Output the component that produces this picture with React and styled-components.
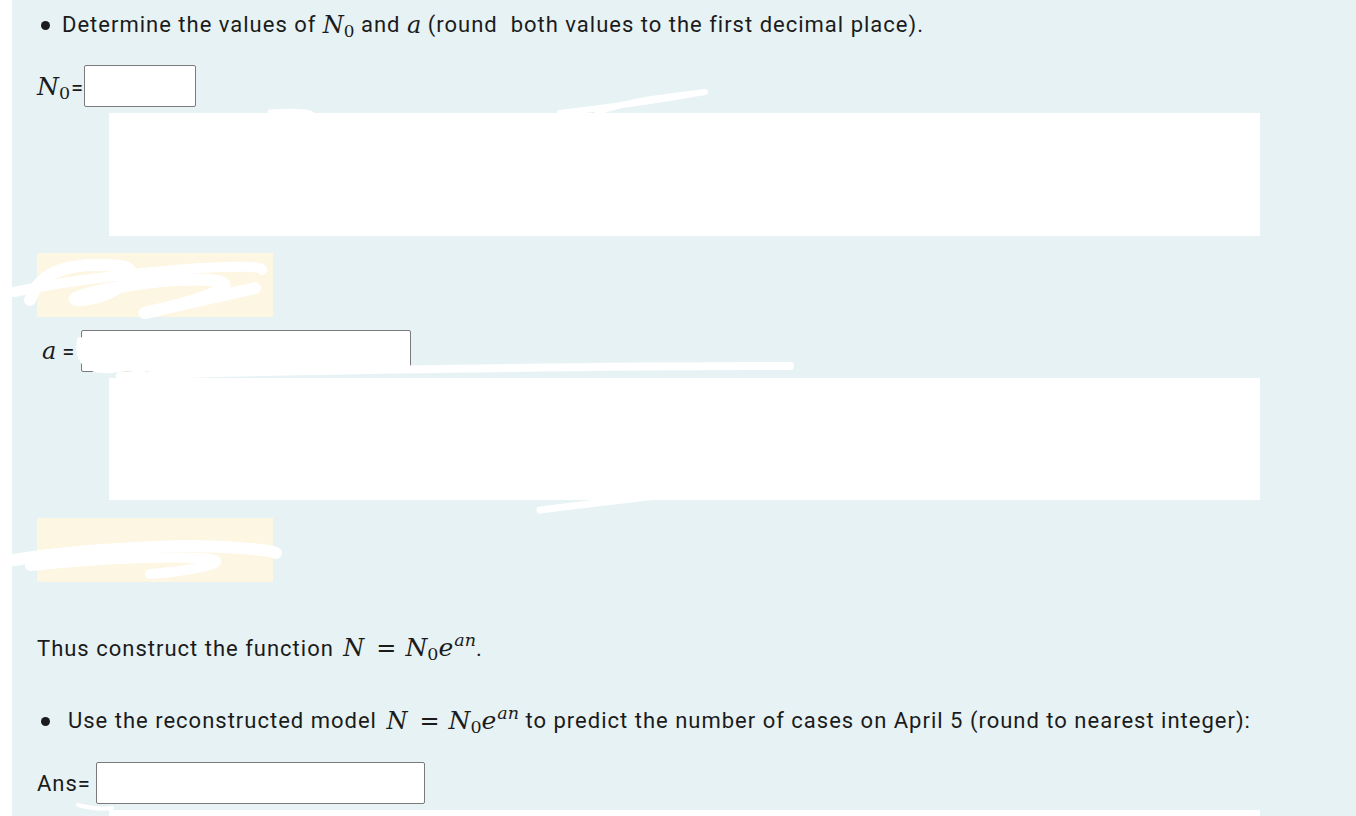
import styled, { createGlobalStyle } from "styled-components";

const GlobalStyle = createGlobalStyle`
  html, body {
    margin: 0;
    padding: 0;
    background: #ffffff;
  }
  body {
    font-family: Roboto, "Liberation Sans", Arial, sans-serif;
    color: #1b1b1b;
    overflow: hidden;
  }
`;

const Page = styled.div`
  position: relative;
  padding-left: 12px;
  height: 816px;
  overflow: hidden;
`;

const Panel = styled.div`
  background-color: #e7f2f4;
  min-height: 816px;
  padding: 10px 25px 0 25px;
  box-sizing: border-box;
  display: flex;
  flex-direction: column;
  align-items: flex-start;
`;

const BulletLine = styled.div`
  display: flex;
  align-items: center;
  height: 30px;
  font-size: 22px;
  letter-spacing: 1px;
  line-height: 30px;
  margin-top: ${(p) => p.$top || 0}px;
  white-space: pre;
  &::before {
    content: "";
    width: 9px;
    height: 9px;
    border-radius: 50%;
    background: #1b1b1b;
    margin: 0 ${(p) => p.$gap || 12}px 0 4px;
    flex-shrink: 0;
  }
`;

const TextLine = styled.div`
  height: 30px;
  font-size: 22px;
  letter-spacing: 1px;
  line-height: 30px;
  margin-top: ${(p) => p.$top || 0}px;
  white-space: pre;
`;

const Math = styled.span`
  font-family: "DejaVu Serif", "Liberation Serif", serif;
  font-style: italic;
  font-size: ${(p) => p.$size || 24}px;
  letter-spacing: 0;
  margin: 0 ${(p) => p.$space || 0}px;
`;

const Upright = styled.span`
  font-family: "DejaVu Serif", "Liberation Serif", serif;
  font-style: normal;
  font-size: ${(p) => p.$size || 24}px;
  letter-spacing: 0;
  margin: 0 ${(p) => p.$space || 0}px;
`;

const Sub = styled.sub`
  font-family: "DejaVu Serif", "Liberation Serif", serif;
  font-style: normal;
  font-size: 0.7em;
  vertical-align: -0.25em;
  line-height: 0;
`;

const Sup = styled.sup`
  font-family: "DejaVu Serif", "Liberation Serif", serif;
  font-style: italic;
  font-size: 0.7em;
  vertical-align: 0.55em;
  line-height: 0;
  margin-left: 1px;
`;

const AnswerRow = styled.div`
  display: flex;
  align-items: center;
  height: 42px;
  margin-top: ${(p) => p.$top || 0}px;
  font-size: 22px;
  letter-spacing: 1px;
`;

const Label = styled.span`
  display: flex;
  align-items: baseline;
  margin-left: ${(p) => p.$indent || 0}px;
  margin-right: ${(p) => p.$gap || 0}px;
`;

const Eq = styled.span`
  font-family: Roboto, "Liberation Sans", Arial, sans-serif;
  font-style: normal;
  font-size: 22px;
  margin-left: ${(p) => p.$left || 0}px;
`;

const Field = styled.div`
  width: ${(p) => p.$width}px;
  height: 42px;
  box-sizing: border-box;
  background: #ffffff;
  border: 1px solid #7a7a7a;
  border-radius: 2px;
`;

const Feedback = styled.div`
  width: 1151px;
  height: ${(p) => p.$height || 123}px;
  margin: 6px 0 0 72px;
  background: #ffffff;
`;

const Hint = styled.div`
  width: 236px;
  height: 64px;
  margin-top: ${(p) => p.$top || 0}px;
  background: #fdf6e3;
`;

const Scribbles = styled.svg`
  position: absolute;
  left: 0;
  top: 0;
  width: 1356px;
  height: 816px;
  pointer-events: none;
`;

const N0 = ({ size }) => (
  <Math $size={size}>
    N<Sub>0</Sub>
  </Math>
);

const Model = () => (
  <>
    <Math $space={3}>N</Math>
    <Upright $space={9}>=</Upright>
    <Math $size={25}>
      N<Sub>0</Sub>e<Sup>an</Sup>
    </Math>
  </>
);

const App = () => {
  return (
    <Page>
      <GlobalStyle />
      <Panel>
        <BulletLine>
          {"Determine the values of "}
          <N0 />
          {" and "}
          <Math>a</Math>
          {" (round  both values to the first decimal place)."}
        </BulletLine>

        <AnswerRow $top={25}>
          <Label $gap={0}>
            <N0 size={25} />
            <Eq $left={1}>=</Eq>
          </Label>
          <Field $width={112} />
        </AnswerRow>
        <Feedback $height={123} />
        <Hint $top={17} />

        <AnswerRow $top={13}>
          <Label $indent={5} $gap={6}>
            <Math>a</Math>
            <Eq $left={6}>=</Eq>
          </Label>
          <Field $width={330} />
        </AnswerRow>
        <Feedback $height={122} />
        <Hint $top={18} />

        <TextLine $top={51}>
          {"Thus construct the function "}
          <Model />.
        </TextLine>

        <BulletLine $top={43} $gap={18}>
          {"Use the reconstructed model "}
          <Model />
          {" to predict the number of cases on April 5 (round to nearest integer):"}
        </BulletLine>

        <AnswerRow $top={26}>
          <Label $gap={5}>Ans=</Label>
          <Field $width={329} />
        </AnswerRow>
        <Feedback $height={40} />
      </Panel>

      <Scribbles viewBox="0 0 1356 816">
        <g fill="none" stroke="#ffffff" strokeLinecap="round" strokeLinejoin="round">
          <path d="M598 112 C630 100 680 95 705 92 C660 100 620 106 560 113" strokeWidth="6" />
          <path d="M270 112 C300 110 320 112 310 118" strokeWidth="5" />
          <path d="M14 292 C60 282 120 274 200 268 C240 266 262 266 262 270" strokeWidth="10" />
          <path d="M30 300 C40 270 70 262 120 266 C150 270 110 300 80 300 C50 300 150 276 210 280 C250 284 200 300 150 312 C120 318 220 296 255 288" strokeWidth="12" />
          <path d="M80 340 C76 362 90 372 110 370 C140 366 160 372 120 378" strokeWidth="6" />
          <path d="M120 376 C300 370 600 366 790 366" strokeWidth="8" />
          <path d="M540 510 C620 500 700 490 760 486" strokeWidth="7" />
          <path d="M14 560 C60 552 120 548 180 546 C230 546 270 550 276 553" strokeWidth="12" />
          <path d="M30 566 C90 560 150 556 200 558 C240 560 200 570 150 574" strokeWidth="10" />
          <path d="M78 805 C90 808 100 810 112 808" strokeWidth="4" />
        </g>
      </Scribbles>
    </Page>
  );
};

export default App;
